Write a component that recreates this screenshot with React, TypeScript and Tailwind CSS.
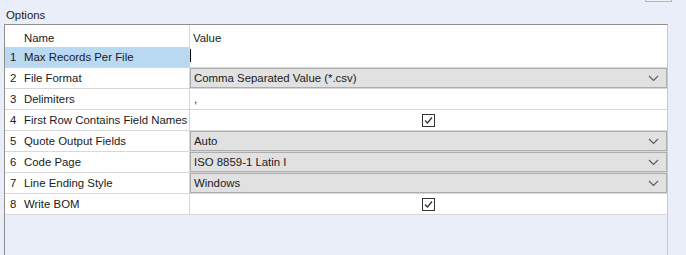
const rows: { n: number; name: string; kind: 'text' | 'combo' | 'check'; value?: string; selected?: boolean }[] = [
  { n: 1, name: 'Max Records Per File', kind: 'text', value: '', selected: true },
  { n: 2, name: 'File Format', kind: 'combo', value: 'Comma Separated Value (*.csv)' },
  { n: 3, name: 'Delimiters', kind: 'text', value: ',' },
  { n: 4, name: 'First Row Contains Field Names', kind: 'check' },
  { n: 5, name: 'Quote Output Fields', kind: 'combo', value: 'Auto' },
  { n: 6, name: 'Code Page', kind: 'combo', value: 'ISO 8859-1 Latin I' },
  { n: 7, name: 'Line Ending Style', kind: 'combo', value: 'Windows' },
  { n: 8, name: 'Write BOM', kind: 'check' },
]

function Chevron() {
  return (
    <svg width="11" height="7" viewBox="0 0 11 7" className="shrink-0">
      <path d="M1 1 L5.5 5.5 L10 1" fill="none" stroke="#5a5a5a" strokeWidth="1.1" />
    </svg>
  )
}

function CheckBox() {
  return (
    <div className="w-[13px] h-[13px] border border-[#333] bg-white flex items-center justify-center">
      <svg width="11" height="11" viewBox="0 0 11 11">
        <path d="M2 5.5 L4.5 8 L9 2.5" fill="none" stroke="#333" strokeWidth="1.3" />
      </svg>
    </div>
  )
}

export default function App() {
  return (
    <div
      className="w-[686px] h-[255px] bg-[#eaeef8] flex flex-col text-[11.4px] text-[#1a1a1a] overflow-hidden whitespace-nowrap"
      style={{ fontFamily: '"Liberation Sans", Arial, sans-serif' }}
    >
      {/* Title row */}
      <div className="h-[24px] flex items-start shrink-0">
        <span className="ml-[6px] mt-[8px] leading-[14px]">Options</span>
        <div className="ml-auto mr-[14px] w-[27px] h-[2px] border-x border-b border-[#b5b5b5] bg-[#f0f0f0]" />
      </div>

      {/* Grid */}
      <div className="ml-[4px] w-[664px] flex-1 border-t border-l border-r border-t-[#8f8f8f] border-l-[#8f8f8f] border-r-[#c9c9c9] flex flex-col">
        {/* Header */}
        <div className="h-[22px] flex bg-white shrink-0">
          <div className="w-[185px] pl-[19px] pt-[5px] border-r border-[#d5d5d5]">Name</div>
          <div className="flex-1 pl-[3px] pt-[5px]">Value</div>
        </div>

        {rows.map((r) => (
          <div key={r.n} className="h-[21px] flex bg-white border-b border-[#d8d8d8] shrink-0">
            <div
              className={`w-[185px] flex items-center pt-[1px] border-r border-[#d5d5d5] ${r.selected ? 'bg-[#b9d8f1]' : ''}`}
            >
              <span className="w-[19px] pl-[5px]">{r.n}</span>
              <span>{r.name}</span>
            </div>
            <div className="flex-1 flex items-stretch">
              {r.kind === 'combo' && (
                <div className="flex-1 flex items-center justify-between bg-[#e1e1e1] border border-[#adadad] pl-[3px] pr-[7px]">
                  <span className="pt-[2px]">{r.value}</span>
                  <Chevron />
                </div>
              )}
              {r.kind === 'text' && (
                <div className="flex-1 flex items-center pl-[4px] pt-[1px]">
                  {r.selected ? <div className="w-[1px] h-[13px] bg-black -ml-[4px] mt-[-4px]" /> : <span>{r.value}</span>}
                </div>
              )}
              {r.kind === 'check' && (
                <div className="flex-1 flex items-center justify-center">
                  <CheckBox />
                </div>
              )}
            </div>
          </div>
        ))}
      </div>
    </div>
  )
}
